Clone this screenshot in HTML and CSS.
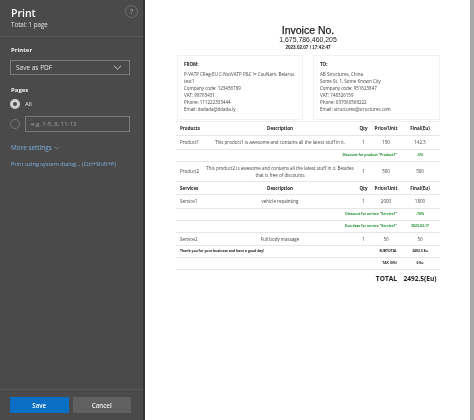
FILE: index.html
```html
<!DOCTYPE html>
<html lang="en">
<head>
<meta charset="utf-8">
<title>Print</title>
<link rel="stylesheet" href="styles.css">
</head>
<body>
<div class="app">
  <aside class="panel">
    <header class="head">
      <div>
        <h1 class="title">Print</h1>
        <div class="total">Total: 1 page</div>
      </div>
      <span class="help">?</span>
    </header>
    <div class="settings">
      <div class="label">Printer</div>
      <div class="select"><span>Save as PDF</span>
        <svg class="chev" width="9" height="5" viewBox="0 0 9 5"><path d="M1 .8l3.5 3.4L8 .8" fill="none" stroke="#d8d8d8" stroke-width=".9"/></svg>
      </div>
      <div class="label pages">Pages</div>
      <div class="radio-row"><span class="radio on"></span><span class="all">All</span></div>
      <div class="radio-row second"><span class="radio"></span><span class="input">e.g. 1-5, 8, 11-13</span></div>
      <div class="more">More settings
        <svg width="6" height="4" viewBox="0 0 6 4"><path d="M.8 1l2.2 2 2.2-2" fill="none" stroke="#8f9aa5" stroke-width=".6"/></svg>
      </div>
      <div class="system">Print using system dialog... (Ctrl+Shift+P)</div>
    </div>
    <footer class="foot">
      <button class="btn save">Save</button>
      <button class="btn cancel">Cancel</button>
    </footer>
  </aside>
  <main class="preview">
    <section class="sheet">
      <div class="inv-head">
        <div class="inv-title">Invoice No.</div>
        <div class="inv-num">1,675,786,460,205</div>
        <div class="inv-date">2023.02.07 / 17:42:47</div>
      </div>
      <div class="parties">
        <div class="party">
          <div class="party-h">FROM:</div>
          <div>P-VATP CReg-EU C-NotVATP P&amp;C != CouNam, Belarus</div>
          <div>test1</div>
          <div>Company code: 123456789</div>
          <div>VAT: 98765431</div>
          <div>Phone: 111222333444</div>
          <div>Email: dadada@ddada.ly</div>
        </div>
        <div class="party">
          <div class="party-h">TO:</div>
          <div>AB Structures, China</div>
          <div>Some St. 1, Some Known City</div>
          <div>Company code: 951623847</div>
          <div>VAT: 748326159</div>
          <div>Phone: 037060568222</div>
          <div>Email: structures@structures.com</div>
        </div>
      </div>
      <table class="items">
        <colgroup><col class="c1"><col class="c2"><col class="c3"><col class="c4"><col class="c5"></colgroup>
        <tbody>
          <tr class="h14 hd"><th class="left">Products</th><th>Description</th><th>Qty</th><th>Price/Unit</th><th>Final(Eu)</th></tr>
          <tr class="h14"><td class="left">Product1</td><td>This product1 is awesome and contains all the latest stuff in it.</td><td>1</td><td>150</td><td>142.5</td></tr>
          <tr class="h12 note"><td colspan="4" class="right">Discount for product "Product1"</td><td>-5%</td></tr>
          <tr class="h20"><td class="left">Product2</td><td>This product2 is awesome and contains all the latest stuff in it. Besides that is free of discounts</td><td>1</td><td>500</td><td>500</td></tr>
          <tr class="h13 hd"><th class="left">Services</th><th>Description</th><th>Qty</th><th>Price/Unit</th><th>Final(Eu)</th></tr>
          <tr class="h14"><td class="left">Service1</td><td>vehicle repainting</td><td>1</td><td>2000</td><td>1800</td></tr>
          <tr class="h12 note"><td colspan="4" class="right">Discount for service "Service1"</td><td>-10%</td></tr>
          <tr class="h12 note"><td colspan="4" class="right">Due date for service "Service1"</td><td>2023-02-17</td></tr>
          <tr class="h13"><td class="left">Service2</td><td>Full body massage</td><td>1</td><td>50</td><td>50</td></tr>
          <tr class="h12 sum"><td colspan="2" class="left thanks">Thank you for your business and have a good day!</td><td colspan="2" class="right">SUBTOTAL</td><td>2492.5 Eu</td></tr>
          <tr class="h12 sum"><td colspan="4" class="right">TAX (0%)</td><td>0 Eu</td></tr>
          <tr class="h18 total-row"><td colspan="4" class="right">TOTAL</td><td>2492.5(Eu)</td></tr>
        </tbody>
      </table>
    </section>
  </main>
  <div class="scrollbar"></div>
</div>
</body>
</html>
```
FILE: styles.css
```css
* { box-sizing: border-box; }
html, body { margin: 0; height: 100%; overflow: hidden; }
body { font-family: "Open Sans", "Liberation Sans", sans-serif; background: #fff; }
.app { display: flex; width: 474px; height: 420px; filter: blur(.25px); }

.panel { width: 145px; flex: none; display: flex; flex-direction: column; background: #4a4a4a; color: #f0f0f0; border-right: 2px solid #333; }
.head { height: 37px; padding: 5px 5px 0 11px; display: flex; justify-content: space-between; align-items: flex-start; border-bottom: 1px solid #5a5a5a; }
.title { margin: 1px 0 0; font-size: 10.5px; line-height: 14px; font-weight: 600; color: #fff; }
.total { font-size: 6.2px; line-height: 8px; margin-top: 1px; color: #e4e4e4; }
.help { width: 13px; height: 13px; border: 1px solid #6e6e6e; border-radius: 50%; font-size: 7px; line-height: 11px; text-align: center; color: #b8b8b8; }
.settings { padding: 9px 13px 0 11px; }
.label { font-size: 6px; line-height: 8px; font-weight: 700; color: #f2f2f2; }
.select { margin: 6px 0 0 -1px; height: 15px; border: 1px solid #7a7a7a; padding: 0 7px 0 5px; display: flex; align-items: center; justify-content: space-between; font-size: 6.5px; color: #e6e6e6; }
.pages { margin-top: 11px; }
.radio-row { display: flex; align-items: center; gap: 5px; margin: 5px 0 0 -1px; height: 10px; }
.radio { width: 10px; height: 10px; flex: none; border-radius: 50%; border: 1px solid #777; }
.radio.on { border: 3px solid #cfcfcf; background: #4a4a4a; }
.all { font-size: 6px; color: #e8e8e8; }
.second { margin-top: 7px; height: 16px; }
.input { flex: 1; height: 16px; border: 1px solid #7a7a7a; padding-left: 5px; font-size: 6px; line-height: 14px; color: #a0a0a0; }
.more { margin-top: 11px; font-size: 6.4px; line-height: 9px; color: #7fb0dc; display: flex; align-items: center; gap: 2px; }
.system { margin-top: 8px; font-size: 5.6px; line-height: 8px; color: #7fb0dc; white-space: nowrap; }
.foot { margin-top: auto; height: 31px; padding: 7px 12px 0 10px; display: flex; gap: 4px; border-top: 1px solid #565656; }
.btn { flex: 1; height: 16px; padding: 0; border: 0; font-family: inherit; font-size: 6.2px; font-weight: 600; color: #fff; }
.save { background: #0a6fc4; }
.cancel { background: #606060; color: #ececec; }

.preview { flex: 1; min-width: 0; padding: 25px 0 0 31px; background: #fff; }
.sheet { width: 264px; color: #333; }
.inv-head { text-align: center; font-family: "Liberation Sans", sans-serif; color: #222; }
.inv-title { font-size: 10.5px; line-height: 11px; font-weight: 400; -webkit-text-stroke: .25px #222; }
.inv-num { font-size: 6.9px; line-height: 8px; margin-top: 0; }
.inv-date { font-size: 4.6px; line-height: 6px; margin-top: 1px; font-weight: 700; }
.parties { display: flex; justify-content: space-between; margin-top: 4px; padding-left: 1px; }
.party { width: 126px; height: 65px; padding: 5px 6px; border: 1px solid #f1f1f1; font-size: 4.5px; line-height: 7px; color: #444; }
.party + .party { width: 127px; }
.party-h { font-weight: 700; color: #222; margin-bottom: 3px; }
.items { width: 264px; margin-top: 1px; table-layout: fixed; border-collapse: collapse; border-top: 1px solid #eee; font-size: 4.5px; color: #444; }
.c1 { width: 29px; } .c2 { width: 150px; } .c3 { width: 17px; } .c4 { width: 28px; } .c5 { width: 40px; }
.items td, .items th { padding: 0; text-align: center; line-height: 6.5px; border-bottom: 1px solid #e6e6e6; }
.items th { font-weight: 700; color: #222; }
.items .left { text-align: left; padding-left: 4px; }
.items .right { text-align: right; padding-right: 3px; }
.h12 { height: 12px; } .h13 { height: 13px; } .h14 { height: 14px; } .h18 { height: 18px; } .h20 { height: 20px; }
.note td { font-size: 3.4px; font-weight: 700; color: #1c8f2e; }
.sum td { font-size: 3.4px; font-weight: 700; color: #222; }
.items .thanks { white-space: nowrap; }
.total-row td { border-bottom: 0; font-size: 6.6px; font-weight: 700; color: #222; }

.scrollbar { width: 4px; flex: none; background: #a9a9a9; }
```
